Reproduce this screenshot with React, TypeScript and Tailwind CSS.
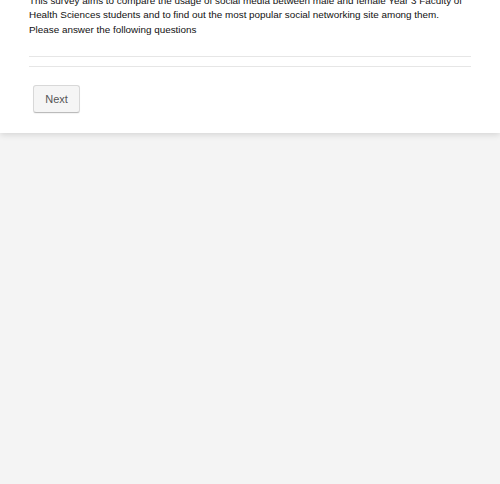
export default function App() {
  return (
    <div className="min-h-[484px] bg-[#f4f4f4] overflow-hidden" style={{ fontFamily: '"Liberation Sans", Arial, sans-serif' }}>
      <div className="bg-white shadow-[0_2px_6px_rgba(0,0,0,0.12)] px-[29px] pb-[20px] -mt-[6px]">
        <div className="text-[9.9px] leading-[14.3px] text-[#111]">
          <p>This survey aims to compare the usage of social media between male and female Year 3 Faculty of Health Sciences students and to find out the most popular social networking site among them.</p>
          <p>Please answer the following questions</p>
        </div>
        <div className="mt-[19px] border-t border-[#e6e6e6]" />
        <div className="mt-[9px] border-t border-[#e6e6e6]" />
        <div className="pt-[18px] pl-[4px]">
          <button className="h-[28px] w-[47px] rounded-[3px] border border-[#d8d8d8] border-b-[#bbb] border-b-dotted bg-[#f5f5f5] text-[11px] text-[#555] shadow-[0_1px_1px_rgba(0,0,0,0.05)]">Next</button>
        </div>
      </div>
    </div>
  );
}
